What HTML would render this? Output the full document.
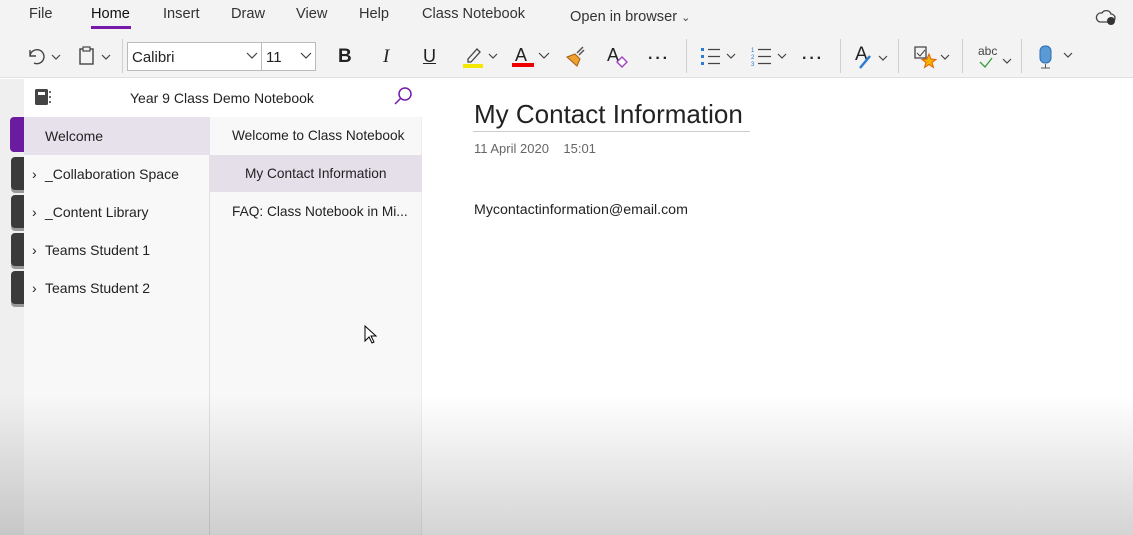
<!DOCTYPE html>
<html><head><meta charset="utf-8"><style>
*{margin:0;padding:0;box-sizing:border-box}
body{width:1133px;height:535px;overflow:hidden;background:#fff;font-family:"Liberation Sans",sans-serif;position:relative;color:#222}
.abs{position:absolute}
.top{left:0;top:0;width:1133px;height:78px;background:#f3f3f3;border-bottom:1px solid #e0e0e0}
.menu{top:6px;font-size:14.6px;color:#333}
.chev{font-size:11px;color:#444}
.sep{width:1px;height:34px;background:#d0d0d0;top:39px}
.strip{left:0;top:79px;width:24px;height:456px;background:#efefef}
.sec{left:24px;top:79px;width:186px;height:456px;background:#f8f8f8;border-right:1px solid #e0e0e0}
.pgs{left:210px;top:117px;width:212px;height:418px;background:#f8f8f8;border-right:1px solid #ececec}
.hdr{left:24px;top:79px;width:398px;height:38px;background:#fff}
.row{height:38px;line-height:38px;font-size:14px;color:#222}
.tab{left:11px;width:13px;height:33px;border-radius:4px 0 0 4px;background:#3a3a3a;box-shadow:0 3px 0 #999}
.fade{left:0;top:395px;width:1133px;height:140px;background:linear-gradient(rgba(0,0,0,0),rgba(0,0,0,0.17))}
.dots{top:50px;font-size:16px;letter-spacing:2px;font-weight:bold}
</style></head><body>
<div class="abs top"></div>
<div class="abs menu" style="left:29px">File</div>
<div class="abs menu" style="left:91px;color:#111">Home</div>
<div class="abs" style="left:91px;top:26px;width:40px;height:3px;background:#7719aa"></div>
<div class="abs menu" style="left:163px">Insert</div>
<div class="abs menu" style="left:231px">Draw</div>
<div class="abs menu" style="left:296px">View</div>
<div class="abs menu" style="left:359px">Help</div>
<div class="abs menu" style="left:422px">Class Notebook</div>
<div class="abs menu" style="left:570px;top:9px">Open in browser <span class="chev">&#8964;</span></div>
<svg class="abs" style="left:1095px;top:8px" width="22" height="18" viewBox="0 0 22 18"><path d="M5 14h11a4 4 0 0 0 0-8 5 5 0 0 0-9-1 4 4 0 0 0-2 9z" fill="none" stroke="#444" stroke-width="1.3"/><circle cx="16" cy="13" r="4" fill="#333"/></svg>

<svg class="abs" style="left:26px;top:46px" width="40" height="20"><path d="M4 4v6h6M4 10a7 7 0 1 1 4 7" fill="none" stroke="#444" stroke-width="1.4"/><path d="M26 9l4 4 4-4" fill="none" stroke="#444" stroke-width="1.2"/></svg>
<svg class="abs" style="left:78px;top:45px" width="40" height="22"><rect x="2" y="4" width="13" height="15" fill="none" stroke="#444" stroke-width="1.4"/><rect x="5" y="2" width="7" height="4" fill="#f3f3f3" stroke="#444" stroke-width="1.2"/><path d="M24 10l4 4 4-4" fill="none" stroke="#444" stroke-width="1.2"/></svg>
<div class="abs sep" style="left:122px"></div>
<div class="abs" style="left:127px;top:42px;width:189px;height:29px;background:#fff;border:1px solid #bbb"></div>
<div class="abs" style="left:261px;top:43px;width:1px;height:27px;background:#bbb"></div>
<div class="abs" style="left:132px;top:49px;font-size:15px">Calibri</div>
<svg class="abs" style="left:246px;top:52px" width="12" height="8"><path d="M1 1l5 5 5-5" fill="none" stroke="#444" stroke-width="1.2"/></svg>
<div class="abs" style="left:266px;top:49px;font-size:15px">11</div>
<svg class="abs" style="left:300px;top:52px" width="12" height="8"><path d="M1 1l5 5 5-5" fill="none" stroke="#444" stroke-width="1.2"/></svg>
<div class="abs" style="left:338px;top:46px;font-size:19px;font-weight:bold">B</div>
<div class="abs" style="left:383px;top:46px;font-size:19px;font-style:italic;font-family:'Liberation Serif',serif">I</div>
<div class="abs" style="left:423px;top:46px;font-size:18px;text-decoration:underline">U</div>
<svg class="abs" style="left:462px;top:44px" width="40" height="26"><path d="M6 15l9-10 3 3-9 10H6z" fill="none" stroke="#444" stroke-width="1.3"/><rect x="1" y="20" width="20" height="4" fill="#f5e800"/><path d="M27 10l4 4 4-4" fill="none" stroke="#444" stroke-width="1.2"/></svg>
<div class="abs" style="left:515px;top:45px;font-size:18px">A</div>
<div class="abs" style="left:512px;top:63px;width:22px;height:4px;background:#e00"></div>
<svg class="abs" style="left:538px;top:52px" width="12" height="8"><path d="M1 1l5 5 5-5" fill="none" stroke="#444" stroke-width="1.2"/></svg>
<svg class="abs" style="left:564px;top:45px" width="22" height="22"><path d="M3 12l8-3 5 5-3 7z" fill="#f0a030" stroke="#a06010"/><path d="M13 8l6-6M15 10l5-5" stroke="#555" stroke-width="1.5"/></svg>
<div class="abs" style="left:607px;top:45px;font-size:18px">A</div>
<svg class="abs" style="left:615px;top:54px" width="14" height="14"><path d="M2 8l5-5 5 5-5 5z" fill="#fff" stroke="#a040c0" stroke-width="1.4"/></svg>
<div class="abs dots" style="left:648px">···</div>
<div class="abs sep" style="left:686px"></div>
<svg class="abs" style="left:700px;top:45px" width="40" height="22"><g fill="#2b7cd3"><rect x="1" y="3" width="3" height="3"/><rect x="1" y="10" width="3" height="3"/><rect x="1" y="17" width="3" height="3"/></g><path d="M8 4.5h12M8 11.5h12M8 18.5h12" stroke="#444" stroke-width="1.3"/><path d="M27 9l4 4 4-4" fill="none" stroke="#444" stroke-width="1.2"/></svg>
<svg class="abs" style="left:751px;top:45px" width="40" height="22"><text x="0" y="7" font-size="6" fill="#2b7cd3">1</text><text x="0" y="14" font-size="6" fill="#2b7cd3">2</text><text x="0" y="21" font-size="6" fill="#2b7cd3">3</text><path d="M7 4.5h13M7 11.5h13M7 18.5h13" stroke="#444" stroke-width="1.3"/><path d="M27 9l4 4 4-4" fill="none" stroke="#444" stroke-width="1.2"/></svg>
<div class="abs dots" style="left:802px">···</div>
<div class="abs sep" style="left:840px"></div>
<div class="abs" style="left:855px;top:44px;font-size:19px">A</div>
<svg class="abs" style="left:856px;top:52px" width="36" height="18"><path d="M4 16l10-12" stroke="#2b7cd3" stroke-width="2.5"/><path d="M23 4l4 4 4-4" fill="none" stroke="#444" stroke-width="1.2"/></svg>
<div class="abs sep" style="left:898px"></div>
<svg class="abs" style="left:913px;top:45px" width="42" height="24"><path d="M2 2h11v11H2z" fill="none" stroke="#444" stroke-width="1.3"/><path d="M4 8l3 3 5-6" fill="none" stroke="#444"/><path d="M16 9l2 5 5 .5-4 3 1.5 5-4.5-3-4.5 3 1.5-5-4-3 5-.5z" fill="#f5b400" stroke="#e06000"/><path d="M28 10l4 4 4-4" fill="none" stroke="#444" stroke-width="1.2"/></svg>
<div class="abs sep" style="left:962px"></div>
<div class="abs" style="left:978px;top:44px;font-size:12px;color:#444">abc</div>
<svg class="abs" style="left:978px;top:56px" width="40" height="14"><path d="M2 6l5 5 7-9" fill="none" stroke="#3a9a3a" stroke-width="1.3"/><path d="M25 3l4 4 4-4" fill="none" stroke="#444" stroke-width="1.2"/></svg>
<div class="abs sep" style="left:1021px"></div>
<svg class="abs" style="left:1038px;top:44px" width="40" height="26"><rect x="2" y="2" width="11" height="17" rx="5" fill="#5b9bd5" stroke="#2b6cb3"/><path d="M7.5 20v4M3 24h9" stroke="#555"/><path d="M26 9l4 4 4-4" fill="none" stroke="#444" stroke-width="1.2"/></svg>

<div class="abs strip"></div>
<div class="abs sec"></div>
<div class="abs pgs"></div>
<div class="abs hdr"></div>
<svg class="abs" style="left:34px;top:88px" width="20" height="18"><rect x="1" y="1" width="13" height="16" rx="1.5" fill="#444"/><rect x="4" y="4" width="7" height="3" fill="#fff"/><path d="M16 3v2M16 8v2M16 13v2" stroke="#444" stroke-width="1.6"/></svg>
<div class="abs" style="left:130px;top:90px;font-size:14px">Year 9 Class Demo Notebook</div>
<svg class="abs" style="left:393px;top:86px" width="20" height="20"><circle cx="12" cy="8" r="6" fill="none" stroke="#7719aa" stroke-width="1.5"/><path d="M8 12L2 18" stroke="#7719aa" stroke-width="1.5"/></svg>

<div class="abs" style="left:24px;top:117px;width:186px;height:38px;background:#e7e1ec"></div>
<div class="abs" style="left:10px;top:117px;width:14px;height:35px;background:#6a1ba0;border-radius:4px 0 0 4px"></div>
<div class="abs tab" style="top:157px"></div>
<div class="abs tab" style="top:195px"></div>
<div class="abs tab" style="top:233px"></div>
<div class="abs tab" style="top:271px"></div>
<div class="abs row" style="left:45px;top:117px">Welcome</div>
<div class="abs row" style="left:32px;top:155px">›</div><div class="abs row" style="left:45px;top:155px">_Collaboration Space</div>
<div class="abs row" style="left:32px;top:193px">›</div><div class="abs row" style="left:45px;top:193px">_Content Library</div>
<div class="abs row" style="left:32px;top:231px">›</div><div class="abs row" style="left:45px;top:231px">Teams Student 1</div>
<div class="abs row" style="left:32px;top:269px">›</div><div class="abs row" style="left:45px;top:269px">Teams Student 2</div>

<div class="abs" style="left:210px;top:155px;width:212px;height:37px;background:#e5dfea"></div>
<div class="abs row" style="left:232px;top:117px;font-size:13.7px">Welcome to Class Notebook</div>
<div class="abs row" style="left:245px;top:155px;font-size:13.7px">My Contact Information</div>
<div class="abs row" style="left:232px;top:193px;font-size:13.7px">FAQ: Class Notebook in Mi...</div>
<svg class="abs" style="left:364px;top:325px" width="14" height="20"><path d="M1 1v15l4-4 3 6 2-1-3-6h5z" fill="#fff" stroke="#000"/></svg>

<div class="abs" style="left:474px;top:99px;font-size:26px;color:#222">My Contact Information</div>
<div class="abs" style="left:473px;top:131px;width:277px;height:1px;background:#ccc"></div>
<div class="abs" style="left:474px;top:141px;font-size:13px;color:#666">11 April 2020&nbsp;&nbsp;&nbsp;&nbsp;15:01</div>
<div class="abs" style="left:474px;top:202px;font-size:14.2px;color:#222">Mycontactinformation@email.com</div>

<div class="abs fade"></div>
</body></html>
